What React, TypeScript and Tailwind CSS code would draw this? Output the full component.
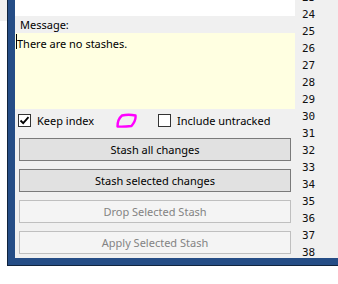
import React from 'react';

const lines = Array.from({ length: 16 }, (_, i) => 23 + i);

function CheckBox({ checked }: { checked?: boolean }) {
    return (
        <span className="flex h-[13px] w-[13px] shrink-0 items-center justify-center border border-[#333333] bg-white">
            {checked && (
                <svg width="11" height="11" viewBox="0 0 11 11">
                    <path d="M1.5 5.5 L4.2 8.2 L9.5 2.2" fill="none" stroke="#000" strokeWidth="1.8" />
                </svg>
            )}
        </span>
    );
}

function Btn({ label, disabled }: { label: string; disabled?: boolean }) {
    return (
        <button
            disabled={disabled}
            className={
                disabled
                    ? 'h-[23px] w-full border border-[#bfbfbf] bg-[#f4f4f4] text-[#838383]'
                    : 'h-[23px] w-full border border-[#7a7a7a] bg-[#e1e1e1] text-[#000000]'
            }
        >
            {label}
        </button>
    );
}

export default function App() {
    return (
        <div className="flex h-[284px] w-[338px] overflow-hidden bg-white font-['Noto_Sans',sans-serif] text-[11px] leading-none text-black">
            <div className="w-[7px] shrink-0">
                <div className="h-[21px] bg-[#f0f0f0]" />
            </div>

            <div className="flex h-[266px] w-[331px] shrink-0 border-b border-l border-[#10233d] bg-[#254d86] pb-[7px] pl-[7px]">
                {/* stash panel */}
                <div className="flex w-[280px] shrink-0 flex-col bg-[#f0f0f0]">
                    <div className="h-[16px] bg-white" />
                    <div className="flex h-[17px] items-center pl-[5px]">Message:</div>
                    <div className="relative h-[76px] bg-[#ffffe1] pl-[2px] pt-[5px]">
                        <span className="absolute left-[1px] top-[1px] h-[15px] w-px bg-black" />
                        There are no stashes.
                    </div>

                    <div className="flex flex-col px-[4px] pt-[5px]">
                        <div className="-ml-px flex h-[13px] items-center">
                            <CheckBox checked />
                            <span className="ml-[6px] w-[78px] shrink-0">Keep index</span>
                            <svg className="shrink-0" width="24" height="16" viewBox="0 0 24 16">
                                <path
                                    d="M7 2.5 C11 1.5 16 1.5 20.5 2.5 C21 6 19 10 16.5 13 C12 13.5 6 13.8 2.5 13.5 C2.5 9 4 5 7 2.5 Z"
                                    fill="none"
                                    stroke="#ff00ff"
                                    strokeWidth="2.4"
                                    strokeLinejoin="round"
                                />
                            </svg>
                            <span className="ml-[19px] flex items-center">
                                <CheckBox />
                                <span className="ml-[6px]">Include untracked</span>
                            </span>
                        </div>
                        <div className="mt-[11px] flex flex-col gap-[8px]">
                            <Btn label="Stash all changes" />
                            <Btn label="Stash selected changes" />
                            <Btn label="Drop Selected Stash" disabled />
                            <Btn label="Apply Selected Stash" disabled />
                        </div>
                    </div>
                </div>

                {/* line numbers */}
                <div className="flex-1 overflow-hidden bg-[#f0f0f0] pl-[7px] font-['DejaVu_Sans_Mono',monospace] text-[11px] leading-[17px] text-[#111111]">
                    <div className="-mt-[11px]">
                        {lines.map((n) => (
                            <div key={n}>{n}</div>
                        ))}
                    </div>
                </div>
            </div>
        </div>
    );
}
